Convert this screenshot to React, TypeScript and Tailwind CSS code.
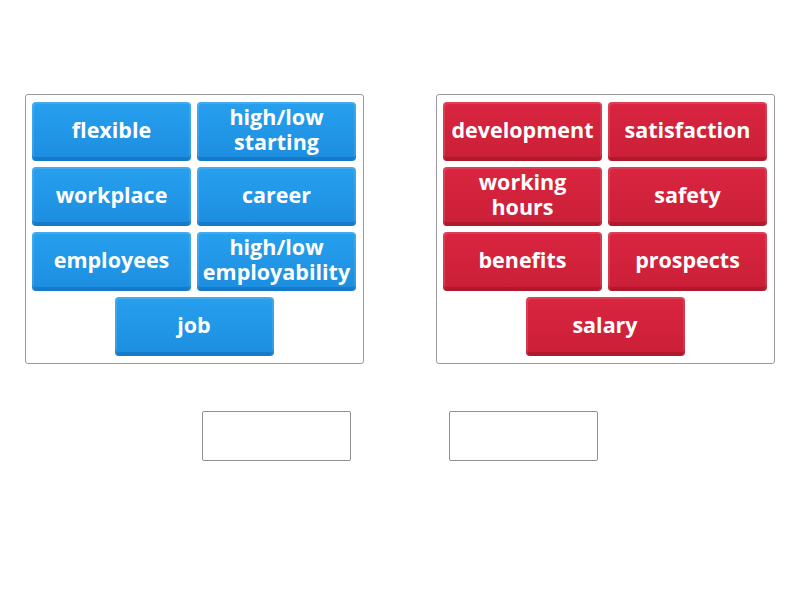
import React from 'react';

type Tile = { label: string[] };

const groups: { color: 'blue' | 'red'; tiles: Tile[] }[] = [
  {
    color: 'blue',
    tiles: [
      { label: ['flexible'] },
      { label: ['high/low', 'starting'] },
      { label: ['workplace'] },
      { label: ['career'] },
      { label: ['employees'] },
      { label: ['high/low', 'employability'] },
      { label: ['job'] },
    ],
  },
  {
    color: 'red',
    tiles: [
      { label: ['development'] },
      { label: ['satisfaction'] },
      { label: ['working', 'hours'] },
      { label: ['safety'] },
      { label: ['benefits'] },
      { label: ['prospects'] },
      { label: ['salary'] },
    ],
  },
];

const tileColors = {
  blue: 'bg-gradient-to-b from-[#27a0ee] to-[#1c8de0] shadow-[inset_0_-4px_0_rgba(0,60,120,0.22),inset_2px_2px_0_rgba(255,255,255,0.12),inset_-2px_0_0_rgba(255,255,255,0.1)]',
  red: 'bg-gradient-to-b from-[#da2540] to-[#ca1f37] shadow-[inset_0_-4px_0_rgba(90,0,15,0.22),inset_2px_2px_0_rgba(255,255,255,0.12),inset_-2px_0_0_rgba(255,255,255,0.1)]',
};

const WordTile = ({ tile, color }: { tile: Tile; color: 'blue' | 'red' }) => (
  <div
    className={`w-[159px] h-[59px] rounded-[4px] flex flex-col items-center justify-center text-white font-bold text-[21.5px] leading-[25px] pb-[5px] ${tileColors[color]}`}
  >
    {tile.label.map((line) => (
      <span key={line}>{line}</span>
    ))}
  </div>
);

export default function App() {
  return (
    <div className="w-[800px] h-[600px] bg-white" style={{ fontFamily: '"Open Sans", "Noto Sans", sans-serif' }}>
      <div className="flex justify-center gap-[72px] pt-[94px]">
        {groups.map((group) => (
          <div
            key={group.color}
            className="w-[339px] h-[270px] border border-[#9a9a9a] rounded-[3px] pt-[7px] pl-[6px] pr-[7px] flex flex-wrap justify-center content-start gap-[6px]"
          >
            {group.tiles.map((tile) => (
              <WordTile key={tile.label.join(' ')} tile={tile} color={group.color} />
            ))}
          </div>
        ))}
      </div>
      <div className="flex justify-center gap-[98px] mt-[47px]">
        <div className="w-[149px] h-[50px] border border-[#8f8f8f] rounded-[2px]" />
        <div className="w-[149px] h-[50px] border border-[#8f8f8f] rounded-[2px]" />
      </div>
    </div>
  );
}
